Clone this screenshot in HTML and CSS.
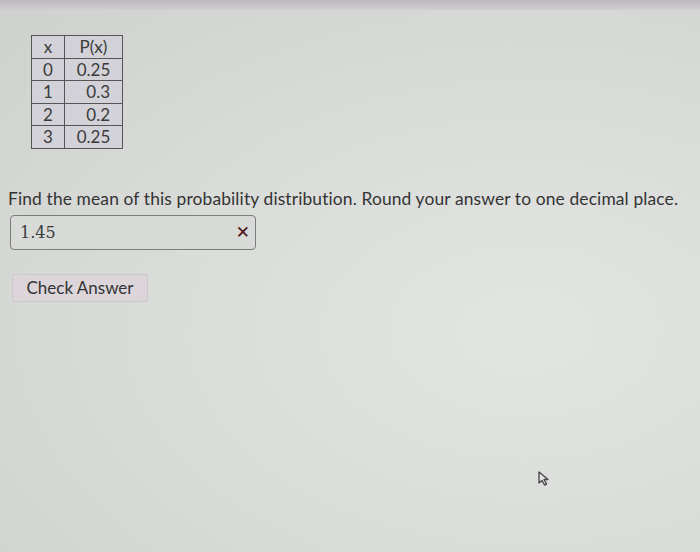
FILE: index.html
```html
<!DOCTYPE html>
<html>
<head>
<meta charset="utf-8">
<link rel="stylesheet" href="styles.css">
</head>
<body>
<div class="topbar"></div>
<main class="page">
  <table class="dist">
    <tr><th class="cx">x</th><th class="cp">P(x)</th></tr>
    <tr><td class="cx">0</td><td class="cp">0.25</td></tr>
    <tr><td class="cx">1</td><td class="cp r">0.3</td></tr>
    <tr><td class="cx">2</td><td class="cp r">0.2</td></tr>
    <tr><td class="cx">3</td><td class="cp">0.25</td></tr>
  </table>
  <p class="question">Find the mean of this probability distribution. Round your answer to one decimal place.</p>
  <div class="answer">
    <span class="val">1.45</span>
    <span class="wrong">✕</span>
  </div>
  <button class="check">Check Answer</button>
</main>
<svg class="cursor" width="14" height="16" viewBox="0 0 14 16"><path d="M2 1 L2 12 L5 9.5 L7.5 14 L9.5 13 L7 8.5 L11 8.5 Z" fill="#e4e6e4" stroke="#4a4a4a" stroke-width="1.4" stroke-linejoin="round"/></svg>
</body>
</html>
```
FILE: styles.css
```css
html, body { margin: 0; padding: 0; }
body {
  width: 700px; height: 552px; overflow: hidden; position: relative;
  background: radial-gradient(ellipse at 75% 60%, #e2e5e2 0%, #dadcd9 50%, #cfd1ce 100%);
  font-family: "Lato", "Liberation Sans", sans-serif;
  color: #343434;
}
.topbar {
  height: 10px;
  background: linear-gradient(to bottom, #bdb6bf, #cfcfd0);
}
.page { padding: 25px 0 0 8px; }
.dist {
  border-collapse: collapse;
  margin-left: 23px;
  font-size: 17px;
  color: #3a3a3a;
}
.dist th, .dist td {
  border: 1.5px solid #555;
  height: 21.5px;
  padding: 0;
  font-weight: normal;
  background: #d3d2d8;
  line-height: 21px;
}
.dist .cx { width: 32px; text-align: center; }
.dist .cp { width: 57px; text-align: center; }
.dist .cp.r { text-align: right; padding-right: 12px; width: 45px; }
.question {
  margin: 39px 0 0 0;
  font-size: 17.4px;
  letter-spacing: 0.13px;
}
.answer {
  margin: 6px 0 0 2px;
  width: 246px; height: 35px;
  border: 1px solid #7c7c7c;
  border-radius: 4px;
  display: flex; align-items: center; justify-content: space-between;
  padding: 0 5px 0 9px; box-sizing: border-box;
  background: #d8dad8;
}
.val { font-family: "DejaVu Serif", "Liberation Serif", serif; font-size: 16px; color: #3b3b3b; }
.wrong { color: #4a1414; font-weight: bold; font-size: 17px; font-family: "DejaVu Sans", sans-serif; }
.check {
  margin: 24px 0 0 4px;
  width: 136px; height: 28px;
  border: 1px solid #cfc7cd;
  border-radius: 2px;
  background: #dcd5da;
  font-family: "Lato", "Liberation Sans", sans-serif;
  font-size: 17px; color: #333;
  padding: 0;
}
.cursor { position: absolute; left: 537px; top: 471px; }
```
